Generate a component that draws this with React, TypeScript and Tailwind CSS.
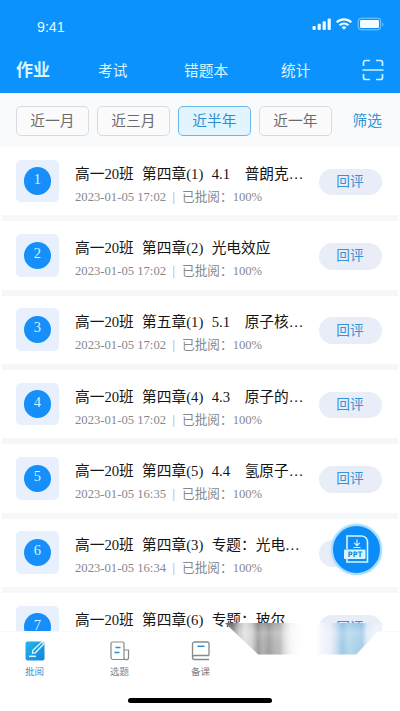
const tabs = [
  { label: "作业", className: "left-[16px] top-[14px] text-[17px] font-bold" },
  { label: "考试", className: "left-[98px] top-[13.500px] text-[14.700px]" },
  { label: "错题本", className: "left-[184px] top-[13.500px] text-[14.700px]" },
  { label: "统计", className: "left-[281px] top-[13.500px] text-[14.700px]" },
];

const ranges = ["近一月", "近三月", "近半年", "近一年"];

const homeworks = [
  { title: "高一20班  第四章(1)  4.1　普朗克…", time: "2023-01-05 17:02", action: "回评" },
  { title: "高一20班  第四章(2)  光电效应", time: "2023-01-05 17:02", action: "回评" },
  { title: "高一20班  第五章(1)  5.1　原子核…", time: "2023-01-05 17:02", action: "回评" },
  { title: "高一20班  第四章(4)  4.3　原子的…", time: "2023-01-05 17:02", action: "回评" },
  { title: "高一20班  第四章(5)  4.4　氢原子…", time: "2023-01-05 16:35", action: "回评" },
  { title: "高一20班  第四章(3)  专题：光电…", time: "2023-01-05 16:34", action: "" },
  { title: "高一20班  第四章(6)  专题：玻尔…", time: "", action: "回评" },
];

function StatusBar() {
  return (
    <div className="flex h-[46px] items-end justify-between pl-[37px] pr-4">
      <span className="mb-[9px] font-['Liberation_Sans'] text-[14.200px] leading-5 text-[#e4fbff]">9:41</span>
      <svg className="mb-[14px] h-[16px] w-[73px]" viewBox="0 0 73 16" fill="none">
        <g fill="#f2fdff">
          <rect x="1.5" y="10" width="3.2" height="4" rx="1" />
          <rect x="6.6" y="7.8" width="3.2" height="6.2" rx="1" />
          <rect x="11.6" y="5.3" width="3.2" height="8.7" rx="1" />
          <rect x="16.6" y="2.5" width="3.2" height="11.5" rx="1" />
          <rect x="49" y="4" width="19" height="8" rx="1.2" />
          <path d="M71.500 6.500v4c1.400-.7 1.400-3.300 0-4Z" opacity=".5" />
        </g>
        <rect x="47.2" y="2.2" width="22.5" height="11.6" rx="3" stroke="#9edcff" strokeWidth=".8" />
        <g stroke="#f2fdff" strokeWidth="2.200">
          <path d="M25.700 6.300c4.200-4 10.400-4 14.600 0" />
          <path d="M28.600 9.300c2.600-2.400 6.200-2.400 8.800 0" />
        </g>
        <path d="M30.600 11.200c1.500-1.300 3.300-1.300 4.800 0L33 13.800Z" fill="#f2fdff" />
      </svg>
    </div>
  );
}

function Header() {
  return (
    <header className="h-[93px] bg-[#0b92fd]">
      <StatusBar />
      <nav className="relative h-[47px] text-[#d9f6ff]">
        {tabs.map((tab) => (
          <span key={tab.label} className={`absolute leading-[22px] ${tab.className}`}>
            {tab.label}
          </span>
        ))}
        <svg className="absolute left-[362px] top-[13px] h-[22px] w-[22px]" viewBox="0 0 22 22" fill="none" stroke="#c8f3ff" strokeWidth="1.700">
          <path d="M1.500 7V3.500a2 2 0 0 1 2-2H8M14 1.500h4.500a2 2 0 0 1 2 2V7M1.500 15v3.500a2 2 0 0 0 2 2H8M14 20.500h4.500a2 2 0 0 0 2-2V15" />
          <path d="M.5 11h21" strokeWidth="1.500" />
        </svg>
      </nav>
    </header>
  );
}

function Filters() {
  return (
    <div className="flex h-[54px] items-center bg-[#f9fafb] pl-[16px] pr-[18px] pt-[2px]">
      <div className="flex gap-[8.300px]">
        {ranges.map((range) => (
          <button
            key={range}
            className={`h-[30px] w-[72.700px] rounded-[5px] border text-[14.700px] leading-none ${
              range === "近半年"
                ? "border-[#6bb8e8] bg-[#e2f4fe] text-[#2f90d0]"
                : "border-[#d9dcdf] bg-[#fbfbfb] text-[#696b6d]"
            }`}
          >
            {range}
          </button>
        ))}
      </div>
      <button className="ml-auto text-[14.700px] text-[#3494d3]">筛选</button>
    </div>
  );
}

type RowProps = { index: number; title: string; time: string; action: string };

function HomeworkRow({ index, title, time, action }: RowProps) {
  return (
    <li className="mx-[2px] flex h-[74.350px] shrink-0 items-start border-b-[6px] border-[#f6f7f9] bg-white pl-[14px] pt-[12.700px]">
      <div className="flex size-[42.500px] shrink-0 items-center justify-center rounded-[5px] bg-[#e8f0fd]">
        <div className="flex size-[27.500px] items-center justify-center rounded-full bg-[#168ffa] pb-[4px] text-[14.500px] leading-none text-[#d5f4ff]">
          {index}
        </div>
      </div>
      <div className="ml-[16.500px] w-[243.500px] shrink-0 whitespace-pre">
        <h3 className="mt-[3px] text-[14.700px] leading-[22px] text-[#141414] [word-spacing:0.500px]">{title}</h3>
        {time && (
          <p className="mt-[3px] flex text-[12.670px] leading-[18px] text-[#85898d]">
            <span className="w-[97.500px]">{time}</span>
            <span className="w-[9.500px] text-[#a5a8ab]">|</span>
            <span>已批阅：</span>
            <span>100%</span>
          </p>
        )}
      </div>
      <button className="mt-[9px] h-[26.500px] w-[63px] rounded-full bg-[#e9edf8] text-[13.700px] leading-none text-[#3494d6]">
        {action}
      </button>
    </li>
  );
}

function PptButton() {
  return (
    <button
      aria-label="PPT"
      className="absolute left-[330.500px] top-[523.500px] flex size-[51px] items-center justify-center rounded-full border-2 border-[#a9dcff] bg-[#0b8cf8] shadow-[0_0_3px_#bfe6ff]"
    >
      <svg className="h-[30px] w-[28px]" viewBox="0 0 28 30" fill="none">
        <path d="M5 15V2h14.200c3.900 0 6.300 2.600 6.300 6.300V28H5V24" stroke="#d7f7ff" strokeWidth="1.600" />
        <path d="M15 5.500v6m-2.800-2.600 2.800 2.800 2.800-2.800M11.500 13.500h7" stroke="#d7f7ff" strokeWidth="1.200" />
        <rect x="2" y="15.500" width="21.500" height="9.500" rx="1" fill="#d7f7ff" />
        <text x="5.800" y="23.200" fontFamily="DejaVu Sans" fontWeight="700" fontSize="7.500" letterSpacing=".2" textLength="14.500" lengthAdjust="spacingAndGlyphs" fill="#1287dc">
          PPT
        </text>
      </svg>
    </button>
  );
}

function MarkIcon() {
  return (
    <svg className="size-[20px]" viewBox="0 0 20 20" fill="none">
      <defs>
        <linearGradient id="mark" x1="0" y1="0" x2="1" y2="1">
          <stop stopColor="#22b7ee" />
          <stop offset="1" stopColor="#1682da" />
        </linearGradient>
      </defs>
      <rect x=".5" y=".5" width="19" height="19" rx="2" fill="url(#mark)" />
      <path d="m7.500 11.700.4-2.400L17 .8l2 2-8.700 9-2.800.5Z" stroke="#dff8ff" strokeWidth="1.300" />
      <path d="M4 15.300h7" stroke="#dff8ff" strokeWidth="1.500" />
    </svg>
  );
}

function TopicIcon() {
  return (
    <svg className="size-[20px]" viewBox="0 0 20 20" fill="none" stroke="#85898c" strokeWidth="1.200">
      <path d="M16 18.500H3a2 2 0 0 1-2-2v-14A1.500 1.500 0 0 1 2.500 1h10A1.500 1.500 0 0 1 14 2.500v14a2 2 0 0 0 4.500 0V9H14" />
      <path d="M5.500 6.500h5M4.500 11.500h5" stroke="#278fd2" strokeWidth="1.500" />
    </svg>
  );
}

function LessonIcon() {
  return (
    <svg className="size-[20px]" viewBox="0 0 20 20" fill="none" stroke="#85898c" strokeWidth="1.300">
      <path d="M18 14.500V2.500A1.500 1.500 0 0 0 16.500 1H3.500a2 2 0 0 0-2 2v13.500M18 14.500H3.500a2 2 0 0 0 0 4H18" />
      <path d="M6.500 5.300h7" stroke="#278fd2" strokeWidth="1.500" />
    </svg>
  );
}

function BottomNav() {
  return (
    <footer className="absolute inset-x-0 bottom-0 h-[80px] border-t border-[#f7f8fa] bg-white">
      <div className="flex pl-[19px] pt-[9px] text-[9.500px] leading-[14px] text-[#808386]">
        <div className="flex w-[31px] flex-col items-center gap-[3.500px] text-[#3694cf]">
          <MarkIcon />
          批阅
        </div>
        <div className="ml-[54px] flex w-[31px] flex-col items-center gap-[3.500px]">
          <TopicIcon />
          选题
        </div>
        <div className="ml-[50px] flex w-[31px] flex-col items-center gap-[3.500px]">
          <LessonIcon />
          备课
        </div>
      </div>
      <div className="absolute left-[128px] top-[65.500px] h-[5.500px] w-[144px] rounded-full bg-black" />
    </footer>
  );
}

// faded streaks that run from the last row into the bottom bar
function Streaks() {
  return (
    <div className="absolute left-[225px] top-[623px] h-[31.500px] w-[158px] bg-white [clip-path:polygon(0_0,100%_0,99%_16%,83%_100%,21%_100%)]">
      <div className="h-full w-full bg-[linear-gradient(90deg,#666_0px,#777_8px,#bbb_14px,#ddd_20px,#c8c8c8_27px,#8a8a8a_33px,#a2a2a2_38px,#8e8e8e_44px,#a8a8a8_50px,#b0b0b0_55px,#dcdcdc_60px,#f6f6f6_66px,#fff_76px,#fff_90px,#f1f3fc_98px,#e5ebf8_106px,#b9d7ee_112px,#8fc0e0_117px,#a9d0e9_124px,#9ccae7_130px,#93c4e4_137px,#dbe8f6_142px,#eceffa_150px)]" />
      <div className="absolute inset-0 bg-[linear-gradient(180deg,#ffffff00_0%,#ffffff4d_30%,#ffffff33_60%,#ffffff26_100%)]" />
    </div>
  );
}

export default function App() {
  return (
    <div className="relative h-[711px] w-[400px] overflow-hidden bg-white font-['Liberation_Sans','Noto_Sans_CJK_SC',sans-serif]">
      <Header />
      <Filters />
      <ul className="flex flex-col font-['Liberation_Serif','Noto_Sans_CJK_SC',serif]">
        {homeworks.map((item, i) => (
          <HomeworkRow key={item.title} index={i + 1} {...item} />
        ))}
      </ul>
      <PptButton />
      <BottomNav />
      <Streaks />
    </div>
  );
}
